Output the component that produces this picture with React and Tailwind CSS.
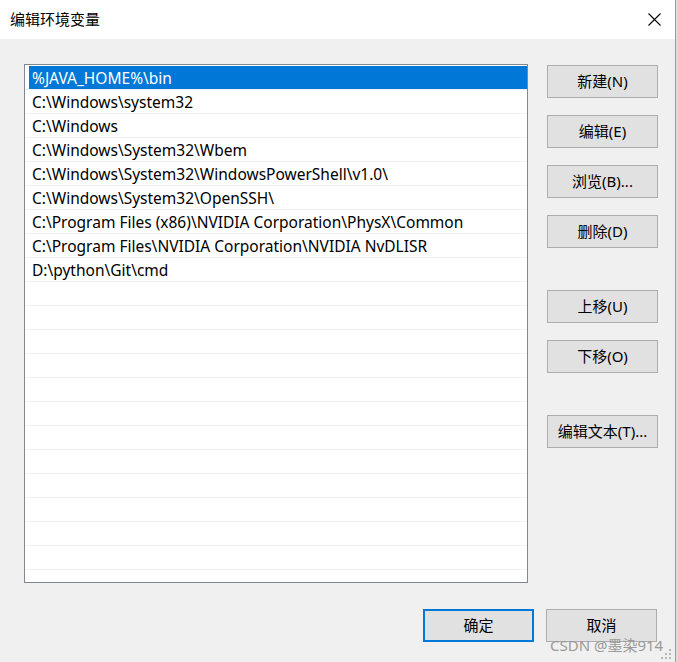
import React from 'react';

const font = { fontFamily: '"Noto Sans", "Noto Sans CJK SC", sans-serif' };

const paths = [
  '%JAVA_HOME%\\bin',
  'C:\\Windows\\system32',
  'C:\\Windows',
  'C:\\Windows\\System32\\Wbem',
  'C:\\Windows\\System32\\WindowsPowerShell\\v1.0\\',
  'C:\\Windows\\System32\\OpenSSH\\',
  'C:\\Program Files (x86)\\NVIDIA Corporation\\PhysX\\Common',
  'C:\\Program Files\\NVIDIA Corporation\\NVIDIA NvDLISR',
  'D:\\python\\Git\\cmd',
];

// list shows 21 full rows plus a partial one
const rows = [...paths, ...Array(13).fill('')];

const Button = ({ children, primary, className = '' }) => (
  <button
    className={`w-[111px] h-[33px] bg-[#e1e1e1] text-[15px] text-black flex items-center justify-center ${
      primary ? 'border-2 border-[#0078d7]' : 'border border-[#adadad]'
    } ${className}`}
  >
    {children}
  </button>
);

export default function App() {
  return (
    <div className="w-[678px] h-[662px] flex bg-[#dcdcdc] overflow-hidden" style={font}>
      <div className="w-[676px] h-full flex flex-col bg-[#f0f0f0] border-r border-[#9c9c9c] relative">
        {/* title bar */}
        <div className="h-[39px] shrink-0 bg-white flex items-center justify-between pl-[10px] pr-[14px]">
          <span className="text-[15px] text-black leading-none">编辑环境变量</span>
          <svg width="13" height="13" viewBox="0 0 13 13" className="text-black">
            <path d="M0.5 0.5 L12.5 12.5 M12.5 0.5 L0.5 12.5" stroke="currentColor" strokeWidth="1.1" fill="none" />
          </svg>
        </div>

        {/* body */}
        <div className="flex-1 flex flex-col pl-[24px] pt-[25px]">
          <div className="flex">
            <div className="w-[504px] h-[519px] border border-[#828790] bg-white pt-[1px] overflow-hidden">
              {rows.map((p, i) => (
                <div key={i} className="h-[24px] flex flex-col">
                  <div
                    className={`h-[23px] flex items-center pt-[2px] text-[15.5px] whitespace-nowrap ${
                      i === 0 ? 'ml-[4px] bg-[#0078d7] text-white pl-[3px]' : 'text-black pl-[7px]'
                    }`}
                  >
                    {p}
                  </div>
                  <div className="h-[1px] bg-[#f0f0f0] ml-[1px]" />
                </div>
              ))}
            </div>

            <div className="ml-[19px] pt-[1px] flex flex-col">
              <Button>新建(N)</Button>
              <Button className="mt-[17px]">编辑(E)</Button>
              <Button className="mt-[17px]">浏览(B)...</Button>
              <Button className="mt-[17px]">删除(D)</Button>
              <Button className="mt-[42px]">上移(U)</Button>
              <Button className="mt-[17px]">下移(O)</Button>
              <Button className="mt-[42px]">编辑文本(T)...</Button>
            </div>
          </div>

          <div className="flex justify-end gap-[12px] pr-[18px] mt-[26px]">
            <Button primary>确定</Button>
            <Button>取消</Button>
          </div>
        </div>

        {/* watermark */}
        <div className="absolute left-[550px] top-[638px] text-[15px] text-[#9a9a9a] leading-none whitespace-nowrap">
          CSDN @墨染914
        </div>

        {/* resize grip */}
        <svg width="12" height="12" viewBox="0 0 12 12" className="absolute right-[3px] bottom-[2px]">
          {[[10, 2], [10, 6], [6, 6], [10, 10], [6, 10], [2, 10]].map(([x, y], i) => (
            <rect key={i} x={x - 1} y={y - 1} width="2" height="2" fill="#b8b8b8" />
          ))}
        </svg>
      </div>
    </div>
  );
}
